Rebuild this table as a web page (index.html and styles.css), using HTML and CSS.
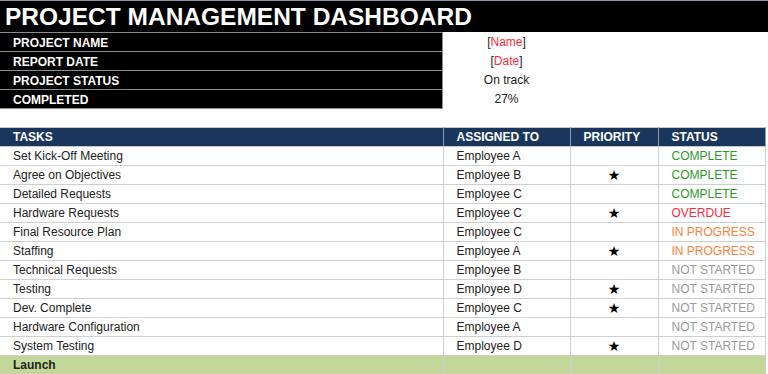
FILE: index.html
```html
<!DOCTYPE html>
<html>
<head>
<meta charset="utf-8">
<link rel="stylesheet" href="styles.css">
</head>
<body>
<div class="title">PROJECT MANAGEMENT DASHBOARD</div>
<div class="info">
  <div class="label">PROJECT NAME</div><div class="value">[<span class="red">Name</span>]</div>
  <div class="label">REPORT DATE</div><div class="value">[<span class="red">Date</span>]</div>
  <div class="label">PROJECT STATUS</div><div class="value">On track</div>
  <div class="label">COMPLETED</div><div class="value">27%</div>
</div>
<table class="tasks">
  <colgroup><col class="c1"><col class="c2"><col class="c3"><col class="c4"></colgroup>
  <thead>
    <tr><th>TASKS</th><th>ASSIGNED TO</th><th>PRIORITY</th><th>STATUS</th></tr>
  </thead>
  <tbody>
    <tr><td>Set Kick-Off Meeting</td><td>Employee A</td><td class="star"></td><td class="complete">COMPLETE</td></tr>
    <tr><td>Agree on Objectives</td><td>Employee B</td><td class="star">★</td><td class="complete">COMPLETE</td></tr>
    <tr><td>Detailed Requests</td><td>Employee C</td><td class="star"></td><td class="complete">COMPLETE</td></tr>
    <tr><td>Hardware Requests</td><td>Employee C</td><td class="star">★</td><td class="overdue">OVERDUE</td></tr>
    <tr><td>Final Resource Plan</td><td>Employee C</td><td class="star"></td><td class="progress">IN PROGRESS</td></tr>
    <tr><td>Staffing</td><td>Employee A</td><td class="star">★</td><td class="progress">IN PROGRESS</td></tr>
    <tr><td>Technical Requests</td><td>Employee B</td><td class="star"></td><td class="notstarted">NOT STARTED</td></tr>
    <tr><td>Testing</td><td>Employee D</td><td class="star">★</td><td class="notstarted">NOT STARTED</td></tr>
    <tr><td>Dev. Complete</td><td>Employee C</td><td class="star">★</td><td class="notstarted">NOT STARTED</td></tr>
    <tr><td>Hardware Configuration</td><td>Employee A</td><td class="star"></td><td class="notstarted">NOT STARTED</td></tr>
    <tr><td>System Testing</td><td>Employee D</td><td class="star">★</td><td class="notstarted">NOT STARTED</td></tr>
    <tr class="launch"><td>Launch</td><td></td><td></td><td></td></tr>
  </tbody>
</table>
</body>
</html>
```

FILE: styles.css
```css
html, body {
  margin: 0;
  padding: 0;
  background: #ffffff;
}
body {
  font-family: "Liberation Sans", Arial, sans-serif;
  font-size: 12px;
  color: #222222;
  width: 768px;
  overflow: hidden;
}
.title {
  box-sizing: border-box;
  height: 32px;
  background: #000000;
  border-top: 1px solid #8a96a6;
  color: #ffffff;
  font-weight: bold;
  font-size: 24.5px;
  line-height: 31px;
  padding-left: 5px;
}
.info {
  display: grid;
  grid-template-columns: 443px 127px;
  grid-auto-rows: 19px;
  margin-bottom: 19px;
}
.label {
  box-sizing: border-box;
  background: #000000;
  color: #ffffff;
  font-weight: bold;
  border-top: 1px solid #8c8c8c;
  border-right: 1px solid #8c8c8c;
  padding-left: 13px;
  padding-top: 1px;
  line-height: 18px;
}
.label:nth-last-child(2) {
  border-bottom: 1px solid #8c8c8c;
  height: 20px;
}
.value {
  text-align: center;
  line-height: 19px;
  padding-top: 1px;
}
.red {
  color: #ff2a3a;
}
.tasks {
  border-collapse: collapse;
  table-layout: fixed;
  width: 765px;
}
.c1 { width: 443px; }
.c2 { width: 127px; }
.c3 { width: 88px; }
.c4 { width: 107px; }
.tasks th, .tasks td {
  height: 18px;
  padding: 1px 0 0 13px;
  box-sizing: border-box;
  text-align: left;
  white-space: nowrap;
  line-height: 17px;
  border: 1px solid #cfcfcf;
}
.tasks th {
  background: #1b365d;
  color: #ffffff;
  font-weight: bold;
  border-left-color: #8e9ab0;
  border-right-color: #8e9ab0;
  border-top-color: #c8c8c8;
  border-bottom-color: #c8c8c8;
}
.tasks td:first-child, .tasks th:first-child {
  border-left: none;
}
.tasks td.star {
  padding: 1px 0 0 0;
  text-align: center;
  font-family: "DejaVu Sans", sans-serif;
  font-size: 14px;
  color: #000000;
}
.complete { color: #2a9a2a; }
.overdue { color: #ff2a3a; }
.progress { color: #ff8040; }
.notstarted { color: #9a9a9a; }
.launch td {
  background: #c4d79b;
  font-weight: bold;
}
```
